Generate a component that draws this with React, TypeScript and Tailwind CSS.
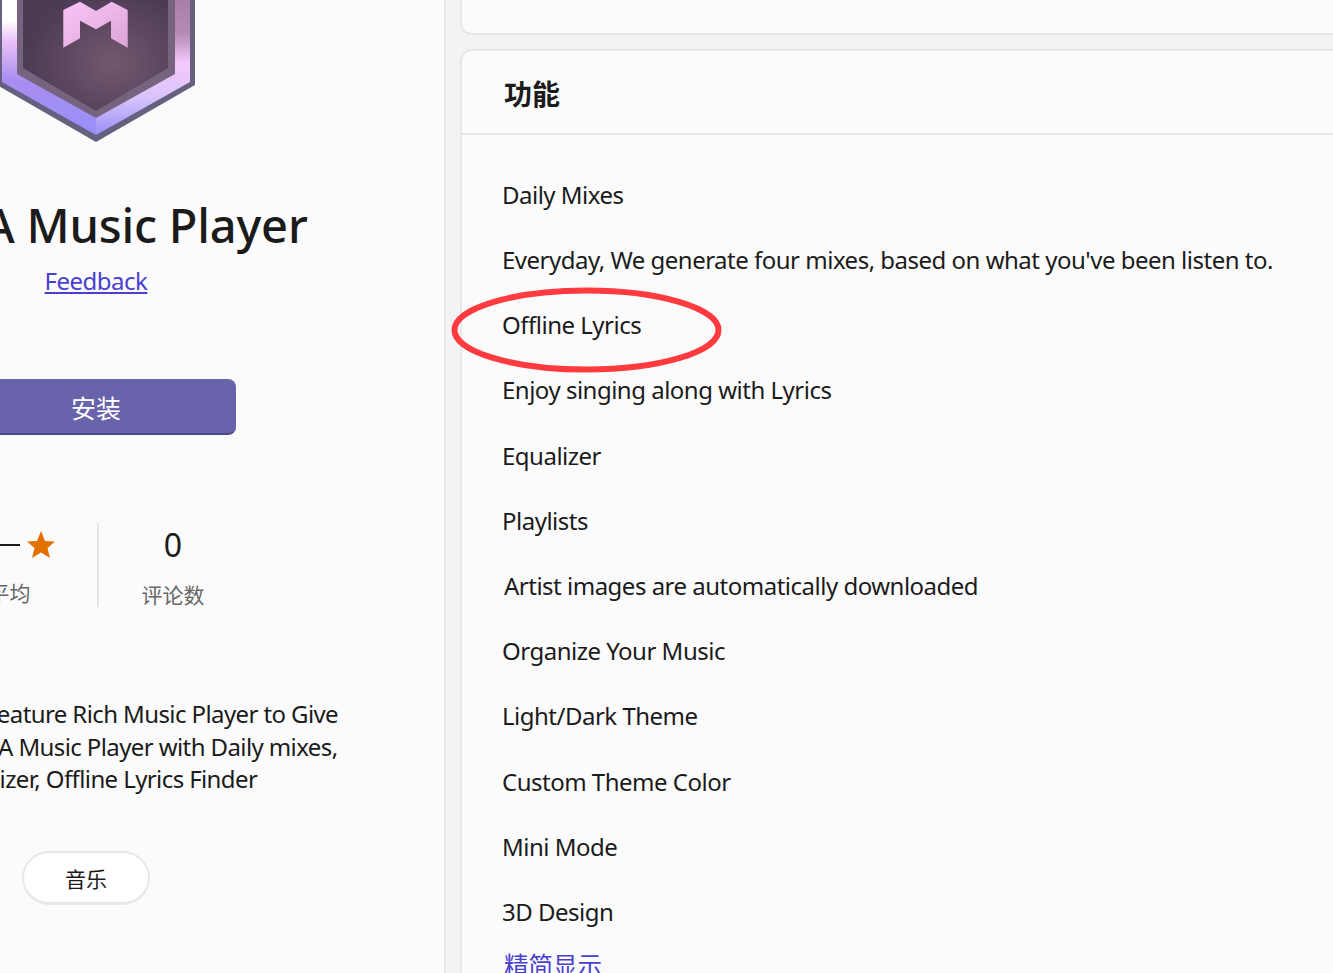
const features = [
  "Daily Mixes",
  "Everyday, We generate four mixes, based on what you've been listen to.",
  "Offline Lyrics",
  "Enjoy singing along with Lyrics",
  "Equalizer",
  "Playlists",
  "Artist images are automatically downloaded",
  "Organize Your Music",
  "Light/Dark Theme",
  "Custom Theme Color",
  "Mini Mode",
  "3D Design",
];

const AppLogo = () => (
  <svg width="200" height="143" viewBox="-4 0 200 143" className="shrink-0">
    <defs>
      <linearGradient id="bandLeft" gradientUnits="userSpaceOnUse" x1="0" y1="0" x2="0" y2="135">
        <stop offset="0" stopColor="#ffffff" />
        <stop offset="0.15" stopColor="#ffffff" />
        <stop offset="0.3" stopColor="#eac2f6" />
        <stop offset="0.6" stopColor="#a88df0" />
        <stop offset="1" stopColor="#9a90f8" />
      </linearGradient>
      <linearGradient id="bandRight" gradientUnits="userSpaceOnUse" x1="0" y1="0" x2="0" y2="135">
        <stop offset="0" stopColor="#a97fa8" />
        <stop offset="0.25" stopColor="#b58ab5" />
        <stop offset="0.47" stopColor="#f5c9fc" />
        <stop offset="0.72" stopColor="#d9c4fb" />
        <stop offset="1" stopColor="#9a90f8" />
      </linearGradient>
      <radialGradient id="fill" cx="0.62" cy="0.6" r="0.6">
        <stop offset="0" stopColor="#73586f" />
        <stop offset="1" stopColor="#4c3b54" />
      </radialGradient>
      <linearGradient id="mark" x1="0" y1="0" x2="1" y2="1">
        <stop offset="0" stopColor="#fbc4f9" />
        <stop offset="1" stopColor="#d9a6d6" />
      </linearGradient>
    </defs>
    <polygon points="-3,-10 195,-10 195,85 96,142 -3,85" fill="#66607f" />
    <polygon points="2,-10 96,-10 96,135 2,82" fill="url(#bandLeft)" />
    <polygon points="96,-10 190,-10 190,82 96,135" fill="url(#bandRight)" />
    <polygon points="17,-10 175,-10 175,74 96,118 17,74" fill="#75637f" />
    <polygon points="23,-10 168,-10 168,68 96,111 23,68" fill="url(#fill)" />
    <polygon
      points="63.3,10 80,1.7 96,11 111.7,1.7 127.7,10 127.7,47.7 111,38.3 111,20.7 96,29.3 80,20.7 80,38.3 63.3,47.7"
      fill="url(#mark)"
    />
  </svg>
);

const App = () => {
  return (
    <div
      className="relative flex h-[973px] overflow-hidden bg-[#f3f3f3] text-[#1b1b1b]"
      style={{ fontFamily: '"Noto Sans", "Noto Sans CJK SC", sans-serif' }}
    >
      {/* Left details panel, scrolled off to the left */}
      <div className="h-full w-[446px] shrink-0 overflow-hidden border-r-2 border-[#e8e8e8] bg-[#fbfbfb]">
        <div className="-ml-[100px] flex w-[392px] flex-col items-center">
          <AppLogo />
          <h1 className="mt-[53px] ml-[84px] h-[58px] self-start text-[47px] leading-[58px] font-medium tracking-[-0.2px] whitespace-nowrap">
            A Music Player
          </h1>
          <a href="#" className="mt-[11px] h-[32px] text-[24px] leading-[32px] tracking-[-0.5px] text-[#4a3fd0] underline">
            Feedback
          </a>
          <button className="mt-[82px] h-[56px] w-[280px] shrink-0 rounded-lg border-b-2 border-[#4d4a85] bg-[#6863ab] pt-[5px] text-[25px] text-white">
            安装
          </button>
          <div className="mt-[88px] flex h-[84px] self-start">
            <div className="ml-[22px] flex w-[177px] flex-col items-center border-r-2 border-[#e5e5e5]">
              <div className="flex h-[46px] items-center gap-[7px]">
                <span className="h-[2px] w-[55px] bg-[#1b1b1b]" />
                <svg width="28" height="28" viewBox="0 0 28 28">
                  <polygon points="14,0 18,10 28,10.5 20.5,17 23,27 14,21.5 5,27 7.5,17 0,10.5 10,10" fill="#e37100" />
                </svg>
              </div>
              <span className="mt-[12px] text-[21px] leading-[28px] text-[#666666]">平均</span>
            </div>
            <div className="flex w-[148px] flex-col items-center">
              <span className="h-[44px] text-[32px] leading-[44px]">0</span>
              <span className="mt-[14px] text-[21px] leading-[28px] text-[#666666]">评论数</span>
            </div>
          </div>
          <div className="mt-[91px] flex flex-col self-start pl-[100px] text-[24px] leading-[32.7px] tracking-[-0.6px] whitespace-nowrap">
            <span className="-ml-[15px]">Feature Rich Music Player to Give</span>
            <span className="-ml-[2px]">A Music Player with Daily mixes,</span>
            <span className="-ml-[60px]">Equalizer, Offline Lyrics Finder</span>
          </div>
          <div className="mt-[55px] ml-[122px] flex h-[54px] w-[128px] shrink-0 items-center justify-center self-start rounded-full border-2 border-b-[3px] border-[#e8e8e8] bg-white pt-[4px] text-[21px]">
            音乐
          </div>
        </div>
      </div>

      {/* Right column */}
      <div className="flex min-w-0 flex-1 flex-col pl-[14px]">
        <div className="-mr-4 h-[35px] shrink-0 rounded-bl-[12px] border-b-2 border-l-2 border-[#e8e8e8] bg-[#fbfbfb]" />
        <div className="-mr-4 mt-[14px] flex-1 rounded-tl-[12px] border-t-2 border-l-2 border-[#e8e8e8] bg-[#fbfbfb]">
          <div className="flex h-[84px] items-center border-b-2 border-[#e8e8e8] pt-[4px] pl-[42px] text-[28px] font-bold">
            功能
          </div>
          <div className="pt-[27.3px] pl-[40px] text-[24px] tracking-[-0.5px]">
            {features.map((line) => (
              <div
                key={line}
                className={line.startsWith("Artist") ? "flex h-[65.2px] items-center pl-[2px] whitespace-nowrap" : "flex h-[65.2px] items-center whitespace-nowrap"}
              >
                {line}
              </div>
            ))}
            <a href="#" className="mt-[3px] ml-[2px] block text-[24.5px] tracking-normal text-[#4a3fd0] underline">
              精简显示
            </a>
          </div>
        </div>
      </div>

      {/* Red hand-drawn annotation round "Offline Lyrics" */}
      <svg className="pointer-events-none absolute top-[285px] left-[450px]" width="274" height="90" viewBox="0 0 274 90">
        <ellipse cx="136.5" cy="45" rx="132" ry="39.5" fill="none" stroke="#ff3b3f" strokeWidth="6" />
      </svg>
    </div>
  );
};

export default App;
